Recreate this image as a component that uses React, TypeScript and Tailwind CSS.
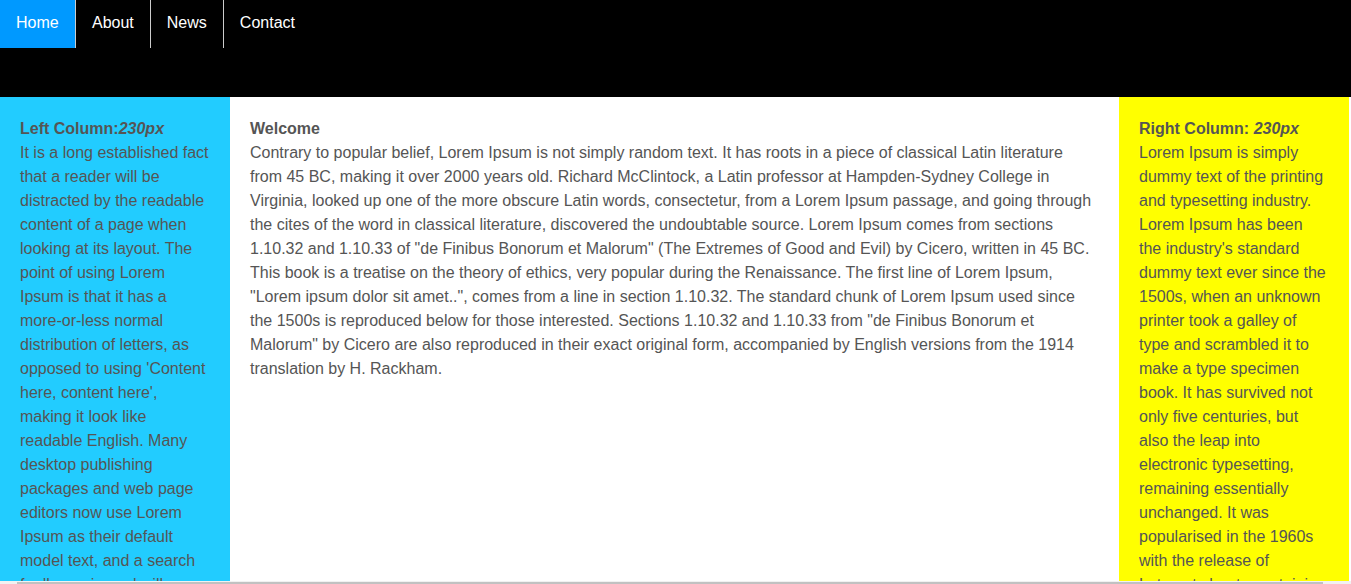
export default function App() {
  const font = { fontFamily: '"Liberation Sans", Arial, sans-serif' };
  return (
    <div className="h-[584px] w-[1351px] overflow-hidden flex flex-col bg-white" style={font}>
      <nav className="h-[97px] shrink-0 bg-black">
        <ul className="flex items-start">
          <li className="h-[48px] px-4 pt-[14px] leading-[18px] text-[16px] text-white bg-[#0099ff] w-[75px]">Home</li>
          <li className="h-[48px] px-4 pt-[14px] leading-[18px] text-[16px] text-white border-l border-[#cccccc]">About</li>
          <li className="h-[48px] px-4 pt-[14px] leading-[18px] text-[16px] text-white border-l border-[#cccccc]">News</li>
          <li className="h-[48px] px-4 pt-[14px] leading-[18px] text-[16px] text-white border-l border-[#cccccc]">Contact</li>
        </ul>
      </nav>
      <main className="flex flex-1 min-h-0 overflow-hidden text-[16px] leading-[24px] text-[#555555]">
        <aside className="w-[230px] shrink-0 bg-[#22ccff] p-5">
          <div className="font-bold">
            Left Column:<i>230px</i>
          </div>
          <p>
            It is a long established fact that a reader will be distracted by the readable content of a page when
            looking at its layout. The point of using Lorem Ipsum is that it has a more-or-less normal distribution of
            letters, as opposed to using 'Content here, content here', making it look like readable English. Many
            desktop publishing packages and web page editors now use Lorem Ipsum as their default model text, and a
            search for 'lorem ipsum' will uncover many web sites still in their infancy.
          </p>
        </aside>
        <section className="w-[889px] shrink-0 bg-white p-5">
          <div className="font-bold">Welcome</div>
          <p>
            Contrary to popular belief, Lorem Ipsum is not simply random text. It has roots in a piece of classical
            Latin literature from 45 BC, making it over 2000 years old. Richard McClintock, a Latin professor at
            Hampden-Sydney College in Virginia, looked up one of the more obscure Latin words, consectetur, from a Lorem
            Ipsum passage, and going through the cites of the word in classical literature, discovered the undoubtable
            source. Lorem Ipsum comes from sections 1.10.32 and 1.10.33 of "de Finibus Bonorum et Malorum" (The
            Extremes of Good and Evil) by Cicero, written in 45 BC. This book is a treatise on the theory of ethics,
            very popular during the Renaissance. The first line of Lorem Ipsum, "Lorem ipsum dolor sit amet..", comes
            from a line in section 1.10.32. The standard chunk of Lorem Ipsum used since the 1500s is reproduced below
            for those interested. Sections 1.10.32 and 1.10.33 from "de Finibus Bonorum et Malorum" by Cicero are also
            reproduced in their exact original form, accompanied by English versions from the 1914 translation by H.
            Rackham.
          </p>
        </section>
        <aside className="w-[230px] shrink-0 bg-[#ffff00] p-5">
          <div className="font-bold">
            Right Column: <i>230px</i>
          </div>
          <p>
            Lorem Ipsum is simply dummy text of the printing and typesetting industry. Lorem Ipsum has been the
            industry's standard dummy text ever since the 1500s, when an unknown printer took a galley of type and
            scrambled it to make a type specimen book. It has survived not only five centuries, but also the leap into
            electronic typesetting, remaining essentially unchanged. It was popularised in the 1960s with the release
            of Letraset sheets containing Lorem Ipsum passages.
          </p>
        </aside>
      </main>
      <div className="h-[3px] shrink-0 bg-[#f1f1f1] pt-[1px]">
        <div className="ml-[17px] h-[2px] w-[1306px] bg-[#c1c1c1]" />
      </div>
    </div>
  );
}
